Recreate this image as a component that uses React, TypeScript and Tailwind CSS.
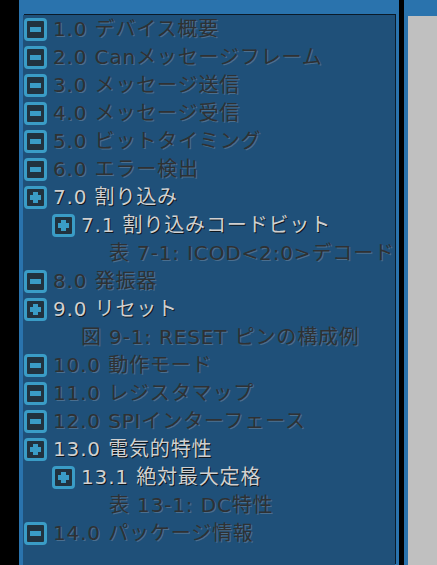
import React from 'react';

type Node = {
    label: string;
    level: number;
    icon?: "plus" | "minus";
};

const items: Node[] = [
    { label: "1.0 デバイス概要", level: 0, icon: "minus" },
    { label: "2.0 Canメッセージフレーム", level: 0, icon: "minus" },
    { label: "3.0 メッセージ送信", level: 0, icon: "minus" },
    { label: "4.0 メッセージ受信", level: 0, icon: "minus" },
    { label: "5.0 ビットタイミング", level: 0, icon: "minus" },
    { label: "6.0 エラー検出", level: 0, icon: "minus" },
    { label: "7.0 割り込み", level: 0, icon: "plus" },
    { label: "7.1 割り込みコードビット", level: 1, icon: "plus" },
    { label: "表 7-1: ICOD<2:0>デコード", level: 2 },
    { label: "8.0 発振器", level: 0, icon: "minus" },
    { label: "9.0 リセット", level: 0, icon: "plus" },
    { label: "図 9-1: RESET ピンの構成例", level: 1 },
    { label: "10.0 動作モード", level: 0, icon: "minus" },
    { label: "11.0 レジスタマップ", level: 0, icon: "minus" },
    { label: "12.0 SPIインターフェース", level: 0, icon: "minus" },
    { label: "13.0 電気的特性", level: 0, icon: "plus" },
    { label: "13.1 絶対最大定格", level: 1, icon: "plus" },
    { label: "表 13-1: DC特性", level: 2 },
    { label: "14.0 パッケージ情報", level: 0, icon: "minus" },
];

function ToggleIcon({ kind }: { kind: "plus" | "minus" }) {
    return (
        <span className="relative w-[23px] h-[23px] shrink-0 rounded-[4px] border-[3px] border-[#3a9cc6] bg-[#21323f]">
            <span className="absolute left-[3px] top-[6px] w-[11px] h-[5px] bg-[#3a9cc6]"></span>
            {kind === "plus" && (
                <span className="absolute left-[6px] top-[3px] w-[5px] h-[11px] bg-[#3a9cc6]"></span>
            )}
        </span>
    );
}

function Row({ node }: { node: Node }) {
    const pad = node.level === 0 ? "pl-[1px]" : node.level === 1 ? "pl-[29px]" : "pl-[57px]";
    const bright = node.icon === "plus";
    return (
        <div className={`h-[28px] flex items-center gap-[6px] whitespace-nowrap ${pad}`}>
            {node.icon ? <ToggleIcon kind={node.icon} /> : <span className="w-[23px] shrink-0"></span>}
            <span
                className={`text-[20px] leading-none tracking-[0.85px] ${bright
                    ? "text-[#d0d0d0] [text-shadow:1px_1px_0_#10171e]"
                    : "text-[#2f3133] [text-shadow:1px_1px_0_rgba(130,150,170,0.45)]"}`}
            >
                {node.label}
            </span>
        </div>
    );
}

export default function App() {
    return (
        <div
            className="w-[437px] h-[565px] flex bg-black overflow-hidden"
            style={{ fontFamily: '"DejaVu Sans", "Noto Sans CJK JP", sans-serif' }}
        >
            <div className="w-[19px] shrink-0 bg-black"></div>
            <div className="w-[380px] shrink-0 bg-[#2a73ad] pt-[15px] pl-[4px] pr-[4px] flex">
                <div className="flex-1 bg-[#1f5079] overflow-hidden shadow-[1px_-1px_0_#0b1a28]">
                    {items.map((n, i) => (
                        <Row key={i} node={n} />
                    ))}
                </div>
            </div>
            <div className="w-[5px] shrink-0 bg-black"></div>
            <div className="flex-1 bg-[#2a73ad] pt-[16px] pl-[4px] flex">
                <div className="flex-1 bg-[#c0c0c0]"></div>
            </div>
        </div>
    );
}
